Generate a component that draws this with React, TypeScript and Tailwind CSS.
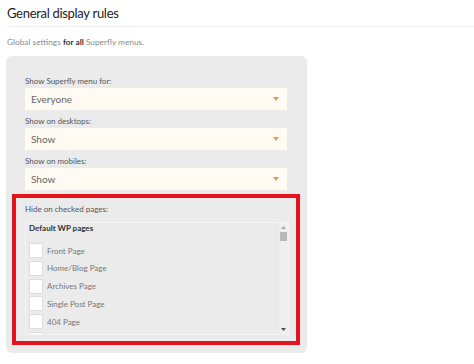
import React from "react";

function Select({ value }: { value: string }) {
  return (
    <div className="mt-[2px] flex h-[22px] items-center justify-between bg-[#fffaf2] pl-[6px] pr-[8px]">
      <span className="text-[10px] leading-[12px] text-[#666666]">{value}</span>
      <svg width="6" height="4" viewBox="0 0 6 4" className="block">
        <path d="M0 0 L6 0 L3 4 Z" fill="#e39a52" />
      </svg>
    </div>
  );
}

function Field({ label, value, first }: { label: string; value: string; first?: boolean }) {
  return (
    <div className={first ? "" : "mt-[6px]"}>
      <div className="text-[8px] leading-[10px] text-[#555555]">{label}</div>
      <Select value={value} />
    </div>
  );
}

export default function App() {
  const pages = ["Front Page", "Home/Blog Page", "Archives Page", "Single Post Page", "404 Page", ""];
  return (
    <div className="h-[364px] w-[474px] overflow-hidden bg-white font-['Lato',sans-serif]">
      <div className="ml-[7px] border-b border-[#eeeeee] pb-[5px] pt-[5px]">
        <h1 className="text-[13px] leading-[16px] tracking-[-0.3px] text-[#222222]">General display rules</h1>
      </div>
      <p className="ml-[7px] mt-[10px] text-[8.3px] leading-[10px] text-[#8a8a8a]">
        Global settings <b className="font-bold text-[#333333]">for all</b> Superfly menus.
      </p>
      <div className="ml-[6px] mt-[9px] h-[297px] w-[301px] rounded-[6px] bg-[#ebebeb] px-[6px] pt-[20px]">
        <div className="pl-[13px] pr-[14px]">
          <Field first label="Show Superfly menu for:" value="Everyone" />
          <Field label="Show on desktops:" value="Show" />
          <Field label="Show on mobiles:" value="Show" />
        </div>
        <div className="mr-[1px] mt-[4px] border-[4px] border-[#e3141b] pb-[6px] pl-[9px] pr-[7px] pt-[6px]">
          <div className="text-[8px] leading-[10px] text-[#555555]">Hide on checked pages:</div>
          <div className="mt-[8px] flex h-[113px] border border-[#f4f4f4]">
            <div className="flex-1 overflow-hidden pl-[3px]">
              <div className="text-[8px] font-bold leading-[11px] text-[#333333]">Default WP pages</div>
              <div className="mt-[9px] flex flex-col gap-[2.8px]">
                {pages.map((p, i) => (
                  <div key={i} className="flex h-[15px] items-center gap-[4px]">
                    <div className="h-[15px] w-[14px] shrink-0 rounded-[1px] border border-[#dddddd] bg-white" />
                    <span className="text-[8px] leading-[10px] text-[#777777]">{p}</span>
                  </div>
                ))}
              </div>
            </div>
            <div className="flex w-[9px] flex-col items-center bg-[#efefef]">
              <div className="flex h-[8px] items-center justify-center">
                <svg width="5" height="3" viewBox="0 0 5 3"><path d="M0 3 L5 3 L2.5 0 Z" fill="#a8a8a8" /></svg>
              </div>
              <div className="mt-[1px] h-[9px] w-[7px] bg-[#b8b8b8]" />
              <div className="flex-1" />
              <div className="mb-[1px] flex h-[8px] items-center justify-center">
                <svg width="5" height="3" viewBox="0 0 5 3"><path d="M0 0 L5 0 L2.5 3 Z" fill="#505050" /></svg>
              </div>
            </div>
          </div>
        </div>
      </div>
    </div>
  );
}
